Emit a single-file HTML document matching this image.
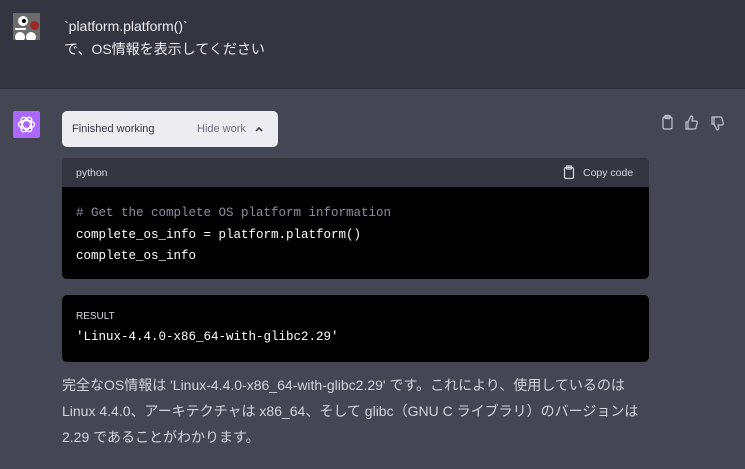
<!DOCTYPE html>
<html><head><meta charset="utf-8"><style>
*{margin:0;padding:0;box-sizing:border-box}
body{width:745px;height:469px;overflow:hidden;background:#444654;font-family:"Liberation Sans","Noto Sans CJK JP",sans-serif;color:#ececf1;position:relative}
.top{position:absolute;left:0;top:0;width:745px;height:89px;background:#343541;border-bottom:1px solid #2c2d37}
.abs{position:absolute}
.mono{font-family:"Liberation Mono",monospace;font-size:12.5px}
</style></head><body>
<div class="top"></div>
<div class="abs" style="left:13px;top:13px;width:27px;height:27px;background:#6b6b6b;overflow:hidden">
 <div class="abs" style="left:5px;top:3px;width:10px;height:10px;border-radius:50%;background:#fff"></div>
 <div class="abs" style="left:9px;top:6px;width:4px;height:4px;border-radius:50%;background:#000"></div>
 <div class="abs" style="left:17px;top:8px;width:9px;height:9px;border-radius:50%;background:#9a2a2a"></div>
 <div class="abs" style="left:2px;top:15px;width:11px;height:2px;background:#fff"></div>
 <div class="abs" style="left:2px;top:19px;width:10px;height:10px;border-radius:50%;background:#fff"></div>
 <div class="abs" style="left:13px;top:19px;width:10px;height:10px;border-radius:50%;background:#fff"></div>
</div>
<div class="abs" style="left:64px;top:15px;font-size:14px;line-height:23px;color:#ececf1">`platform.platform()`<br>で、OS情報を表示してください</div>
<div class="abs" style="left:13px;top:111px;width:27px;height:27px;background:#ab68ff;border-radius:2px">
<svg width="27" height="27" viewBox="0 0 27 27"><g fill="none" stroke="#fff" stroke-width="1.4"><ellipse cx="13.5" cy="13.5" rx="8" ry="4" /><ellipse cx="13.5" cy="13.5" rx="8" ry="4" transform="rotate(60 13.5 13.5)"/><ellipse cx="13.5" cy="13.5" rx="8" ry="4" transform="rotate(120 13.5 13.5)"/></g></svg></div>
<div class="abs" style="left:62px;top:111px;width:216px;height:36px;background:#ececf1;border-radius:5px;color:#343541;font-size:11px">
 <span class="abs" style="left:10px;top:12px">Finished working</span>
 <span class="abs" style="left:135px;top:12px;color:#6e6e80">Hide work</span>
 <svg class="abs" style="left:192px;top:14px" width="10" height="8" viewBox="0 0 10 8"><path d="M2 6 L5 3 L8 6" fill="none" stroke="#343541" stroke-width="1.5"/></svg>
</div>
<svg class="abs" style="left:660px;top:114px" width="70" height="18" viewBox="0 0 70 18" fill="none" stroke="#c5c5d2" stroke-width="1.2">
<rect x="3" y="3" width="9" height="12" rx="1.5"/><rect x="5" y="1.5" width="5" height="3" rx="0.5"/>
<path d="M28 8v7h-2V8z M28 8l3-6c1.5 0 2 1 1.5 3l-.5 2h4c1 0 1.5 1 1.2 2l-1.5 5.5c-.2.6-.6.5-1.2.5H28"/>
<path d="M54 10V3h-2v7z M54 10l3 6c1.5 0 2-1 1.5-3l-.5-2h4c1 0 1.5-1 1.2-2l-1.5-5.5c-.2-.6-.6-.5-1.2-.5H54"/>
</svg>
<div class="abs" style="left:62px;top:158px;width:587px;height:121px;background:#000;border-radius:5px;overflow:hidden">
 <div style="height:29px;background:#343541;position:relative;font-size:10.5px;color:#d9d9e3">
  <span class="abs" style="left:14px;top:9px">python</span>
  <svg class="abs" style="left:501px;top:7px" width="12" height="14" viewBox="0 0 12 14" fill="none" stroke="#d9d9e3" stroke-width="1.2"><rect x="1.5" y="2.5" width="9" height="11" rx="1.5"/><rect x="3.5" y="1" width="5" height="3" rx=".5"/></svg>
  <span class="abs" style="left:521px;top:9px">Copy code</span>
 </div>
 <div class="mono abs" style="left:14px;top:45px;line-height:21.5px;color:#fff;white-space:pre"><span style="color:#8e8ea0"># Get the complete OS platform information</span>
complete_os_info = platform.platform()
complete_os_info</div>
</div>
<div class="abs" style="left:62px;top:295px;width:587px;height:67px;background:#000;border-radius:5px">
 <span class="abs" style="left:14px;top:16px;font-size:10px;color:#d9d9e3">RESULT</span>
 <span class="abs mono" style="left:14px;top:35px;color:#fff">'Linux-4.4.0-x86_64-with-glibc2.29'</span>
</div>
<div class="abs" style="left:62px;top:372px;width:640px;font-size:14px;line-height:26px;color:#d1d5db;white-space:nowrap">完全なOS情報は 'Linux-4.4.0-x86_64-with-glibc2.29' です。これにより、使用しているのは<br>Linux 4.4.0、アーキテクチャは x86_64、そして glibc（GNU C ライブラリ）のバージョンは<br>2.29 であることがわかります。</div>
</body></html>
